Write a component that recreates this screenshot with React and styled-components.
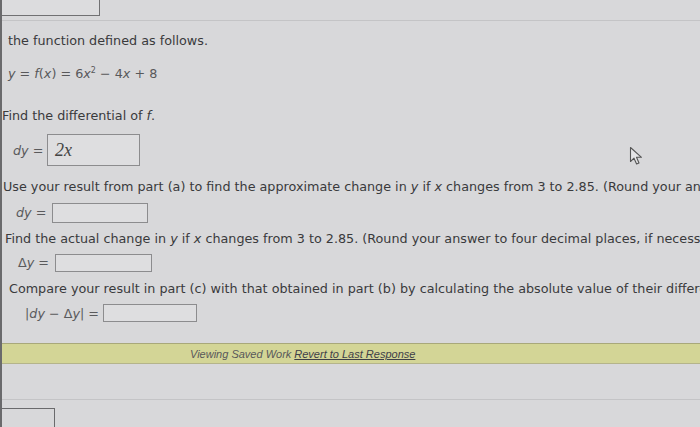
import React from 'react';
import styled, { createGlobalStyle } from 'styled-components';

const Global = createGlobalStyle`
    html, body {
        margin:0;
        padding:0;
        background:#d7d7d9;
    }
    body {
        font-family:"DejaVu Sans", Verdana, sans-serif;
        color:#3a3a3c;
        overflow:hidden;
    }
`;

const Page = styled.div`
    position:relative;
    width:700px;
    height:427px;
    overflow:hidden;
    background:#d8d8da;
    border-left:2px solid #6a6a6c;
    box-sizing:border-box;
    display:flex;
    flex-direction:column;
`;

const TopBox = styled.div`
    width:98px;
    height:17px;
    border-right:1px solid #707072;
    border-bottom:1px solid #707072;
    box-sizing:border-box;
    background:#dcdcde;
`;

const Divider = styled.div`
    height:1px;
    background:#c4c4c6;
    margin-top:${p => p.$top}px;
`;

const Line = styled.div`
    margin-top:${p => p.$top}px;
    padding-left:${p => p.$indent}px;
    height:16px;
    line-height:16px;
    font-size:12.75px;
    white-space:nowrap;
    color:${p => p.$muted ? '#58585a' : '#3a3a3c'};
`;

const Row = styled.div`
    margin-top:${p => p.$top}px;
    padding-left:${p => p.$indent}px;
    height:${p => p.$h}px;
    display:flex;
    align-items:center;
    font-size:12.75px;
    color:#5a5a5c;
    white-space:nowrap;
`;

const Label = styled.span`
    width:${p => p.$w}px;
    flex:none;
`;

const Var = styled.i`
    font-style:italic;
`;

const Sup = styled.sup`
    font-size:8px;
`;

const Box = styled.div`
    width:${p => p.$w}px;
    height:100%;
    box-sizing:border-box;
    border:1px solid #8c8c8e;
    background:#dedee0;
    display:flex;
    align-items:center;
    padding-left:7px;
    font-family:"Liberation Serif", "Times New Roman", serif;
    font-size:18px;
    color:#444;
`;

const Band = styled.div`
    margin-top:21px;
    height:21px;
    background:#d3d596;
    border-top:1px solid #a8a87a;
    border-bottom:1px solid #b4b48a;
    box-sizing:border-box;
    display:flex;
    align-items:center;
    padding-left:188px;
    font-family:"Liberation Sans", Arial, sans-serif;
    font-style:italic;
    font-size:11px;
    color:#58585a;
    gap:3px;
`;

const Link = styled.span`
    text-decoration:underline;
    color:#3e4048;
`;

const BottomBox = styled.div`
    margin-top:8px;
    width:53px;
    height:20px;
    border-top:1px solid #6a6a6c;
    border-right:1px solid #6a6a6c;
    box-sizing:border-box;
`;

const Cursor = styled.svg`
    position:absolute;
    left:627px;
    top:146px;
`;

const App = () => (
    <Page>
        <Global />
        <TopBox />
        <Divider $top={4} />
        <Line $top={12} $indent={6}>the function defined as follows.</Line>
        <Line $top={14} $indent={6} $muted>
            <Var>y</Var> = <Var>f</Var>(<Var>x</Var>) = 6<Var>x</Var><Sup>2</Sup> − 4<Var>x</Var> + 8
        </Line>
        <Line $top={29} $indent={0}>Find the differential of <Var>f</Var>.</Line>
        <Row $top={10} $indent={11} $h={33}>
            <Label $w={34}><Var>dy</Var> =</Label>
            <Box $w={93}><Var>2x</Var></Box>
        </Row>
        <Line $top={13} $indent={1}>
            Use your result from part (a) to find the approximate change in <Var>y</Var> if <Var>x</Var> changes from 3 to 2.85. (Round your answer
        </Line>
        <Row $top={8} $indent={14} $h={20}>
            <Label $w={36}><Var>dy</Var> =</Label>
            <Box $w={96} />
        </Row>
        <Line $top={8} $indent={3}>
            Find the actual change in <Var>y</Var> if <Var>x</Var> changes from 3 to 2.85. (Round your answer to four decimal places, if necessary.)
        </Line>
        <Row $top={7} $indent={16} $h={19}>
            <Label $w={37}>Δ<Var>y</Var> =</Label>
            <Box $w={97} />
        </Row>
        <Line $top={9} $indent={7}>
            Compare your result in part (c) with that obtained in part (b) by calculating the absolute value of their difference.
        </Line>
        <Row $top={7} $indent={23} $h={19}>
            <Label $w={78}>|<Var>dy</Var> − Δ<Var>y</Var>| =</Label>
            <Box $w={94} />
        </Row>
        <Band>
            <span>Viewing Saved Work</span>
            <Link>Revert to Last Response</Link>
        </Band>
        <Divider $top={35} />
        <BottomBox />
        <Cursor width="16" height="20" viewBox="0 0 16 20">
            <path d="M1.5 1.5 L1.5 15.5 L5 12.2 L7.6 18 L10 17 L7.5 11.3 L12.5 11.3 Z" fill="#e4e4e6" stroke="#555" strokeWidth="1.1" strokeLinejoin="round" />
        </Cursor>
    </Page>
);

export default App;
